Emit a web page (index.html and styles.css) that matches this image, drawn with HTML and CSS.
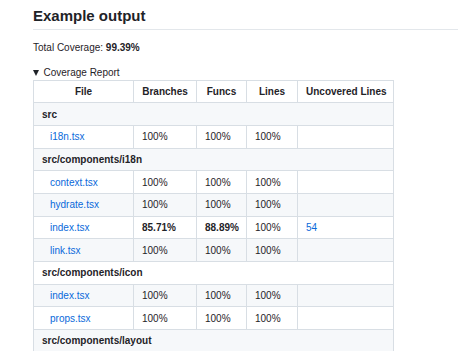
FILE: index.html
```html
<!DOCTYPE html>
<html lang="en">
<head>
<meta charset="utf-8">
<title>Example output</title>
<link rel="stylesheet" href="styles.css">
</head>
<body>
<main class="page">
  <h2 class="title">Example output</h2>
  <p class="total">Total Coverage: <strong>99.39%</strong></p>
  <section class="report">
    <div class="summary"><span class="marker"></span>Coverage Report</div>
    <table class="cov">
      <colgroup>
        <col class="c-file"><col class="c-br"><col class="c-fn"><col class="c-ln"><col class="c-un">
      </colgroup>
      <tr class="alt-w head"><th>File</th><th>Branches</th><th>Funcs</th><th>Lines</th><th>Uncovered Lines</th></tr>
      <tr class="alt-g group"><td colspan="5">src</td></tr>
      <tr class="alt-w"><td class="file"><a href="#">i18n.tsx</a></td><td>100%</td><td>100%</td><td>100%</td><td></td></tr>
      <tr class="alt-g group"><td colspan="5">src/components/i18n</td></tr>
      <tr class="alt-w"><td class="file"><a href="#">context.tsx</a></td><td>100%</td><td>100%</td><td>100%</td><td></td></tr>
      <tr class="alt-g"><td class="file"><a href="#">hydrate.tsx</a></td><td>100%</td><td>100%</td><td>100%</td><td></td></tr>
      <tr class="alt-w"><td class="file"><a href="#">index.tsx</a></td><td><b>85.71%</b></td><td><b>88.89%</b></td><td>100%</td><td><a href="#">54</a></td></tr>
      <tr class="alt-g"><td class="file"><a href="#">link.tsx</a></td><td>100%</td><td>100%</td><td>100%</td><td></td></tr>
      <tr class="alt-w group"><td colspan="5">src/components/icon</td></tr>
      <tr class="alt-g"><td class="file"><a href="#">index.tsx</a></td><td>100%</td><td>100%</td><td>100%</td><td></td></tr>
      <tr class="alt-w"><td class="file"><a href="#">props.tsx</a></td><td>100%</td><td>100%</td><td>100%</td><td></td></tr>
      <tr class="alt-g group"><td colspan="5">src/components/layout</td></tr>
    </table>
  </section>
</main>
</body>
</html>
```
FILE: styles.css
```css
html, body {
  margin: 0;
  padding: 0;
  background: #ffffff;
  overflow: hidden;
}
body {
  font-family: "Liberation Sans", Arial, sans-serif;
  font-size: 10px;
  line-height: 15px;
  color: #1f2328;
}
.page {
  padding: 6px 16px 0 33px;
}
.title {
  margin: 0 0 9.5px;
  font-size: 15px;
  line-height: 19px;
  font-weight: bold;
  padding-bottom: 4px;
  border-bottom: 1px solid #e3e7eb;
}
.total {
  margin: 0 0 10px;
}
.total strong {
  font-weight: bold;
}
.summary {
  display: flex;
  align-items: center;
  height: 15px;
}
.marker {
  width: 0;
  height: 0;
  border-left: 3.5px solid transparent;
  border-right: 3.5px solid transparent;
  border-top: 6px solid #1f2328;
  margin-right: 4.5px;
  margin-top: 1px;
}
.cov {
  border-collapse: collapse;
  table-layout: fixed;
  width: 360px;
  margin: 0;
}
.c-file { width: 100px; }
.c-br { width: 63px; }
.c-fn { width: 50px; }
.c-ln { width: 51px; }
.c-un { width: 96px; }
.cov th,
.cov td {
  border: 1px solid #d8dee4;
  padding: 3.35px 8px;
  line-height: 15px;
  white-space: nowrap;
  text-align: left;
}
.cov th {
  font-weight: bold;
  text-align: center;
}
.alt-w { background: #ffffff; }
.alt-g { background: #f6f8fa; }
.group td {
  font-weight: bold;
}
.cov td.file {
  padding-left: 16px;
}
.cov a {
  color: #0969da;
  text-decoration: none;
}
.cov b {
  font-weight: bold;
}
```
